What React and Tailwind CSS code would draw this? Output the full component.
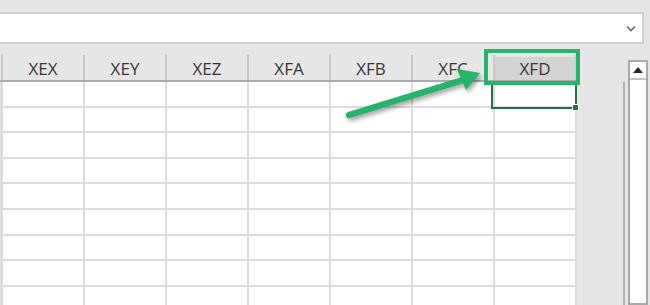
import React from 'react';

const cols = ['XEX', 'XEY', 'XEZ', 'XFA', 'XFB', 'XFC', 'XFD'];
const rows = [0, 1, 2, 3, 4, 5, 6, 7, 8];

const App = () => {
  return (
    <div className="relative w-[650px] h-[305px] overflow-hidden bg-[#e6e6e6] flex flex-col font-['Open_Sans','Noto_Sans',sans-serif]">
      {/* top band */}
      <div className="h-[12px] shrink-0" />

      {/* formula bar */}
      <div className="h-[32px] shrink-0 flex">
        <div className="flex-1 -ml-[2px] mr-[6px] bg-white border-2 border-[#d0d0d0] flex items-center justify-end pr-[6px]">
          <svg width="10" height="7" viewBox="0 0 10 7">
            <polyline points="1,1.5 5,5.5 9,1.5" fill="none" stroke="#6b6b6b" strokeWidth="1.6" />
          </svg>
        </div>
      </div>

      <div className="h-[11px] shrink-0" />

      {/* sheet */}
      <div className="flex flex-1 min-h-0">
        <div className="w-[577px] shrink-0 flex flex-col">
          {/* column headers */}
          <div className="h-[27px] shrink-0 flex border-b-2 border-[#ababab]">
            <div className="w-[1px]" />
            {cols.map((c, i) => (
              <div
                key={c}
                className={
                  i === 6
                    ? 'w-[84px] border-l-2 border-r-2 border-[#c9c9c9] pt-[2px] flex'
                    : 'w-[82px] border-l-2 border-[#c9c9c9] pt-[2px] flex'
                }
              >
                <div
                  className={
                    i === 6
                      ? 'flex-1 bg-[#d3d3d3] flex items-center justify-center text-[17px] text-[#383838]'
                      : 'flex-1 flex items-center justify-center text-[17px] text-[#383838]'
                  }
                >
                  {c}
                </div>
              </div>
            ))}
          </div>

          {/* cells */}
          {rows.map((r) => (
            <div key={r} className="h-[25.6px] shrink-0 flex border-b-2 border-[#dcdcdc] bg-white">
              <div className="w-[1px] bg-[#e0e0e0]" />
              {cols.map((c, i) => (
                <div
                  key={c}
                  className={
                    i === 6
                      ? 'w-[84px] border-l-2 border-r-2 border-[#dcdcdc]'
                      : 'w-[82px] border-l-2 border-[#dcdcdc]'
                  }
                />
              ))}
            </div>
          ))}
        </div>

        {/* right side: split line + vertical scrollbar */}
        <div className="flex-1 flex">
          <div className="w-[46px]" />
          <div className="w-[2px] mt-[27px] bg-[#b4b4b4]" />
          <div className="w-[3px]" />
          <div className="w-[20px] mt-[5px] border-2 border-[#a9a9a9] bg-white flex flex-col">
            <div className="h-[18px] border-b-2 border-[#c2c2c2] flex items-center justify-center">
              <svg width="10" height="6" viewBox="0 0 10 6">
                <polygon points="5,0 10,6 0,6" fill="#2a2a2a" />
              </svg>
            </div>
          </div>
        </div>
      </div>

      {/* active cell */}
      <div className="absolute left-[491px] top-[81px] w-[86px] h-[28px] border-2 border-[#217346]" />
      <div className="absolute left-[572px] top-[104px] w-[7px] h-[7px] bg-[#217346] border border-white" />

      {/* annotation box */}
      <div className="absolute left-[484px] top-[49px] w-[96px] h-[36px] border-[4.5px] border-[#26b36b]" />

      {/* annotation arrow */}
      <svg
        className="absolute left-0 top-0 pointer-events-none drop-shadow-[2px_3px_2px_rgba(0,0,0,0.35)]"
        width="650"
        height="305"
        viewBox="0 0 650 305"
      >
        <line x1="349" y1="115" x2="463" y2="80" stroke="#26b36b" strokeWidth="6.5" strokeLinecap="round" />
        <polygon points="480,73 466,90 457,69" fill="#26b36b" />
      </svg>
    </div>
  );
};

export default App;
